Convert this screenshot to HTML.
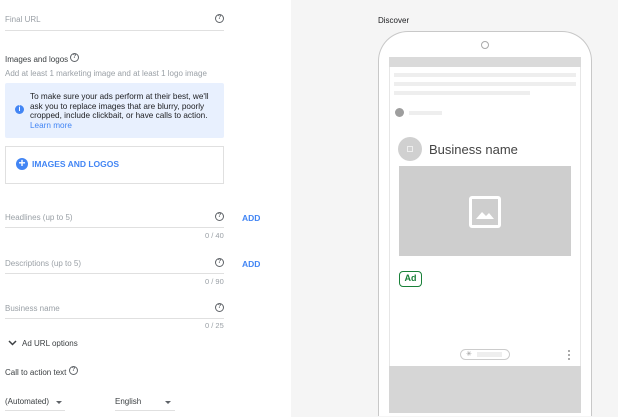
<!DOCTYPE html>
<html style="overflow:hidden;width:618px;height:417px"><head><style>
*{margin:0;padding:0;box-sizing:border-box}
body{width:618px;height:417px;overflow:hidden;background:#fff;font-family:"Liberation Sans",Arial,sans-serif;position:relative}
.a{position:absolute;white-space:nowrap}
.lbl{font-size:8px;color:#9aa0a6}
.line{position:absolute;height:1px;background:#e0e0e0}
.q{position:absolute;width:9px;height:9px;border:1px solid #5f6368;border-radius:50%;font-size:6px;line-height:7px;text-align:center;color:#5f6368;font-weight:bold}
.cnt{font-size:7.5px;color:#9aa0a6}
.add{font-size:8.5px;color:#4285f4;font-weight:bold}
.dk{font-size:8px;color:#3c4043}
.g{position:absolute;background:#eeeeee}
.dd{position:absolute;width:0;height:0;border-left:3px solid transparent;border-right:3px solid transparent;border-top:3px solid #5f6368}
</style></head><body>
<div class="a lbl" style="left:5px;top:15px">Final URL</div>
<div class="q" style="left:215px;top:14px">?</div>
<div class="line" style="left:5px;top:30px;width:219px"></div>

<div class="a dk" style="left:5px;top:55px">Images and logos</div>
<div class="q" style="left:70px;top:53px">?</div>
<div class="a lbl" style="left:5px;top:69px">Add at least 1 marketing image and at least 1 logo image</div>
<div class="a" style="left:5px;top:83px;width:219px;height:55px;background:#e8f0fe;border-radius:2px"></div>
<div class="a" style="left:15px;top:105px;width:9px;height:9px;border-radius:50%;background:#4285f4;color:#fff;font-size:7px;line-height:9px;text-align:center;font-weight:bold">i</div>
<div class="a" style="left:30px;top:92px;font-size:8.2px;line-height:9.6px;color:#202124">To make sure your ads perform at their best, we'll<br>ask you to replace images that are blurry, poorly<br>cropped, include clickbait, or have calls to action.<br><span style="color:#4285f4">Learn more</span></div>
<div class="a" style="left:5px;top:146px;width:219px;height:38px;border:1px solid #e0e0e0"></div>
<div class="a" style="left:16px;top:158px;width:12px;height:12px;border-radius:50%;background:#4285f4;color:#fff;font-size:12px;line-height:11px;text-align:center;font-weight:bold">+</div>
<div class="a" style="left:32px;top:159px;font-size:8.5px;color:#4285f4;font-weight:bold">IMAGES AND LOGOS</div>

<div class="a lbl" style="left:5px;top:213px">Headlines (up to 5)</div>
<div class="q" style="left:215px;top:212px">?</div>
<div class="a add" style="left:242px;top:213px">ADD</div>
<div class="line" style="left:5px;top:227px;width:219px"></div>
<div class="a cnt" style="left:205px;top:231px">0 / 40</div>

<div class="a lbl" style="left:5px;top:259px">Descriptions (up to 5)</div>
<div class="q" style="left:215px;top:258px">?</div>
<div class="a add" style="left:242px;top:259px">ADD</div>
<div class="line" style="left:5px;top:273px;width:219px"></div>
<div class="a cnt" style="left:205px;top:277px">0 / 90</div>

<div class="a lbl" style="left:5px;top:304px">Business name</div>
<div class="q" style="left:215px;top:303px">?</div>
<div class="line" style="left:5px;top:318px;width:219px"></div>
<div class="a cnt" style="left:205px;top:321px">0 / 25</div>

<svg class="a" style="left:8px;top:340px" width="9" height="6"><path d="M1 1 L4.5 4.5 L8 1" stroke="#3c4043" stroke-width="1.5" fill="none"/></svg>
<div class="a dk" style="left:22px;top:339px">Ad URL options</div>
<div class="a dk" style="left:5px;top:368px">Call to action text</div>
<div class="q" style="left:69px;top:366px">?</div>
<div class="a dk" style="left:5px;top:397px">(Automated)</div>
<div class="dd" style="left:56px;top:401px"></div>
<div class="line" style="left:5px;top:410px;width:60px"></div>
<div class="a dk" style="left:115px;top:397px">English</div>
<div class="dd" style="left:165px;top:401px"></div>
<div class="line" style="left:115px;top:410px;width:60px"></div>

<div class="a" style="left:291px;top:0;width:327px;height:417px;background:#f5f5f5;overflow:hidden">
<div class="a" style="left:87px;top:16px;font-size:8px;color:#202124">Discover</div>
<div class="a" style="left:87px;top:31px;width:214px;height:385px;border:1.5px solid #c8c8c8;border-bottom:none;border-radius:30px 30px 0 0;background:#fff"></div>
<div class="a" style="left:190px;top:41px;width:8px;height:8px;border:1px solid #aaa;border-radius:50%"></div>
<div class="a" style="left:98px;top:57px;width:192px;height:356px;border:1px solid #e6e6e6;background:#fff"></div>
<div class="a" style="left:98px;top:57px;width:192px;height:10px;background:#dadada"></div>
<div class="g" style="left:103px;top:73px;width:182px;height:4px"></div>
<div class="g" style="left:103px;top:82px;width:182px;height:4px"></div>
<div class="g" style="left:103px;top:91px;width:136px;height:4px"></div>
<div class="a" style="left:104px;top:108px;width:9px;height:9px;border-radius:50%;background:#9e9e9e"></div>
<div class="g" style="left:118px;top:111px;width:33px;height:4px"></div>
<div class="a" style="left:107px;top:137px;width:24px;height:24px;border-radius:50%;background:#d0d0d0"></div>
<div class="a" style="left:116px;top:146px;width:6px;height:6px;border:1px solid #eee"></div>
<div class="a" style="left:138px;top:142px;font-size:13px;color:#444">Business name</div>
<div class="a" style="left:108px;top:166px;width:172px;height:90px;background:#cecece"></div>
<div class="a" style="left:178px;top:196px;width:32px;height:32px;border:3px solid #fff;border-radius:3px"></div>
<svg class="a" style="left:183px;top:207px" width="22" height="14"><path d="M2 12 L8 5 L12 9 L15 6 L20 12 Z" fill="#fff"/></svg>
<div class="a" style="left:108px;top:271px;width:23px;height:16px;border:1.5px solid #188038;border-radius:4px;font-size:9px;font-weight:bold;color:#188038;text-align:center;line-height:13px">Ad</div>
<div class="a" style="left:169px;top:349px;width:50px;height:11px;border:1px solid #ccc;border-radius:6px"></div>
<div class="a" style="left:175px;top:350px;font-size:7px;color:#999">&#10035;</div>
<div class="g" style="left:186px;top:352px;width:25px;height:5px"></div>
<div class="a" style="left:277px;top:350px;width:2px;height:10px;border-left:2px dotted #aaa"></div>
<div class="a" style="left:98px;top:366px;width:192px;height:47px;background:#d6d6d6"></div>
</div>
</body></html>
